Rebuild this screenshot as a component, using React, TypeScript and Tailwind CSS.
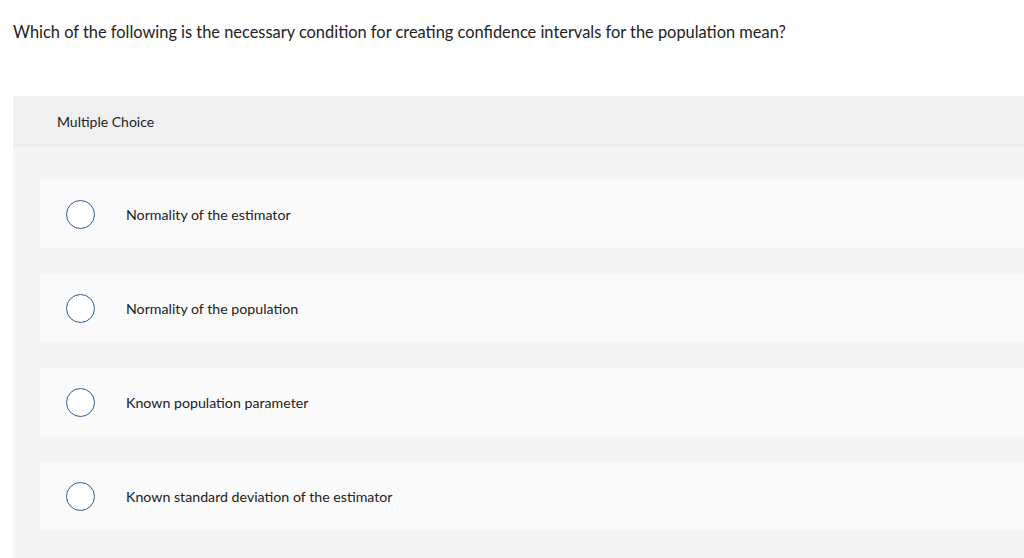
import React from 'react'

const options = [
  'Normality of the estimator',
  'Normality of the population',
  'Known population parameter',
  'Known standard deviation of the estimator',
]

export default function App() {
  return (
    <div
      className="w-[1024px] h-[558px] overflow-hidden bg-white text-[#222]"
      style={{ fontFamily: 'Lato, "Open Sans", sans-serif' }}
    >
      <div className="pl-[13px] pt-[21px] h-[96px]">
        <p className="text-[16.4px] leading-[22px] text-[#222]">
          Which of the following is the necessary condition for creating confidence intervals for the population mean?
        </p>
      </div>

      {/* Question panel */}
      <div className="ml-[13px] w-[1040px] h-[480px] bg-[#f5f5f5]">
        <div className="h-[51px] bg-[#f0f0f0] flex items-center pl-[44px]">
          <span className="text-[14px] text-[#222]">Multiple Choice</span>
        </div>
        <div className="pt-[33px] pl-[27px] flex flex-col gap-[26px]">
          {options.map((opt) => (
            <div
              key={opt}
              className="h-[68px] bg-[#fafafa] rounded-[3px] flex items-center pl-[26px]"
            >
              <span className="w-[29px] h-[29px] rounded-full bg-white border-[1.5px] border-[#2e5d91] shrink-0" />
              <span className="ml-[31px] mt-[1px] text-[14.2px] text-[#222]">{opt}</span>
            </div>
          ))}
        </div>
      </div>
    </div>
  )
}
